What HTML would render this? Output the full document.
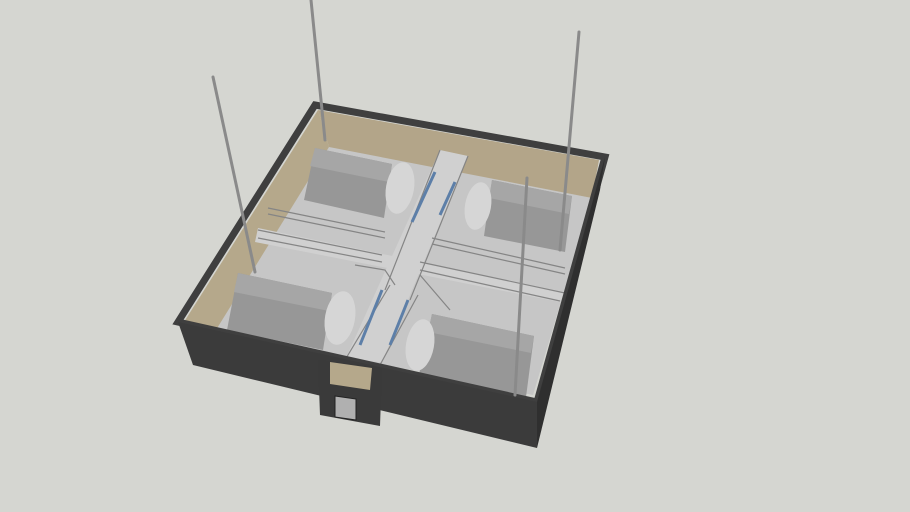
<!DOCTYPE html>
<html><head><style>html,body{margin:0;padding:0;background:#d5d6d1;}svg{display:block}</style></head>
<body>
<svg width="910" height="512" viewBox="0 0 910 512" xmlns="http://www.w3.org/2000/svg">
<rect width="910" height="512" fill="#d5d6d1"/>
<polygon points="328,146 592,198 533,395 216,330" fill="#c6c6c6"/>
<polygon points="318,110 329,147 216,330 184,322" fill="#b5a88b"/>
<polygon points="318,110 599,160 592,198 329,147" fill="#b3a589"/>
<polygon points="258,228 565,292 560,302 255,242" fill="#d0d0d0"/>
<polygon points="440,150 468,156 382,362 345,360" fill="#d0d0d0"/>
<g>
<path d="M315,148 L392,164 L384,218 L304,200 Z" fill="#979797"/>
<path d="M315,148 L392,164 L389,182 L310,166 Z" fill="#a6a6a6"/>
<ellipse cx="400" cy="188" rx="14" ry="26" fill="#d6d6d6" transform="rotate(10 400 188)"/>
<path d="M492,180 L572,196 L565,252 L484,236 Z" fill="#979797"/>
<path d="M492,180 L572,196 L569,214 L489,198 Z" fill="#a6a6a6"/>
<ellipse cx="478" cy="206" rx="13" ry="24" fill="#d6d6d6" transform="rotate(10 478 206)"/>
<path d="M238,273 L332,293 L323,350 L227,330 Z" fill="#979797"/>
<path d="M238,273 L332,293 L329,311 L234,292 Z" fill="#a6a6a6"/>
<ellipse cx="340" cy="318" rx="15" ry="27" fill="#d6d6d6" transform="rotate(10 340 318)"/>
<path d="M432,314 L534,336 L526,397 L419,375 Z" fill="#979797"/>
<path d="M432,314 L534,336 L531,353 L428,332 Z" fill="#a6a6a6"/>
<ellipse cx="420" cy="345" rx="14" ry="26" fill="#d6d6d6" transform="rotate(10 420 345)"/>
</g>
<g stroke="#858585" stroke-width="1.2" fill="none">
<path d="M268,208 L385,232 M268,214 L385,238 M258,230 L382,255 M258,238 L382,262"/>
<path d="M432,238 L565,268 M432,244 L565,274 M420,262 L565,293 M420,270 L560,301"/>
<path d="M440,150 L385,290 M468,156 L410,300 M390,285 L345,360 M418,295 L380,365"/>
<path d="M355,265 L385,270 L395,285 M420,275 L450,310"/>
</g>
<g stroke="#5d7fa8" stroke-width="3">
<path d="M435,172 L412,222 M382,290 L360,345 M408,300 L390,345 M455,182 L440,215"/>
</g>
<polygon points="315,105 605,157 537,402 178,322" fill="none" stroke="#3f3f3f" stroke-width="7"/>
<polygon points="178,322 537,402 537,448 193,365" fill="#3b3b3b"/>
<polygon points="605,157 600,190 537,448 537,402" fill="#2f2f2f"/>
<polygon points="318,360 382,368 380,426 320,415" fill="#3a3a3a"/>
<polygon points="330,362 372,368 370,390 330,384" fill="#b5a88b"/>
<polygon points="335,396 356,399 356,420 335,417" fill="#b0b0b0" stroke="#222" stroke-width="1"/>
<g stroke="#8a8a8a" stroke-width="3" fill="none" stroke-linecap="round">
<path d="M311,0 L325,140"/>
<path d="M213,77 L255,272"/>
<path d="M579,32 L560,250"/>
<path d="M527,178 L515,395"/>
</g>
</svg>
</body></html>
